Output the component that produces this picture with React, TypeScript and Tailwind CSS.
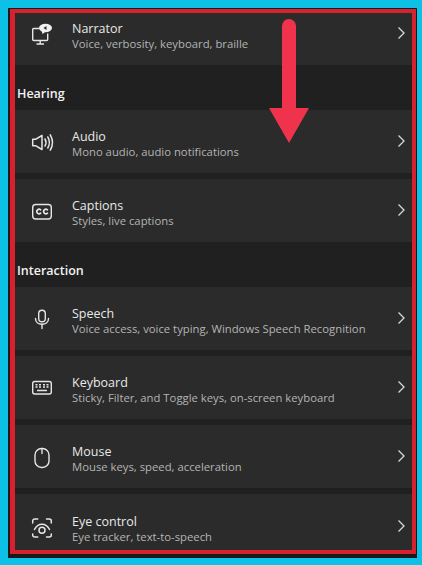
const font = { fontFamily: '"Open Sans", "Noto Sans", sans-serif' };

function NarratorIcon() {
  return (
    <svg width="24" height="24" viewBox="0 0 24 24" fill="none" stroke="#e6e6e6" strokeWidth="1.4">
      <path d="M9.500 6.500H3.700a1 1 0 0 0-1 1v10a1 1 0 0 0 1 1h13a1 1 0 0 0 1-1v-6" />
      <path d="M10.200 18.500v3M6.500 22h7.500" />
      <ellipse cx="15.500" cy="6" rx="6.500" ry="4.200" fill="#f0f0f0" stroke="none" />
      <path d="M11.500 8.500l1 3.500 4-3z" fill="#f0f0f0" stroke="none" />
      <path d="M13.500 6l3-2v4z" fill="#2b2b2b" stroke="none" />
    </svg>
  );
}

function AudioIcon() {
  return (
    <svg width="24" height="24" viewBox="0 0 24 24" fill="none" stroke="#e6e6e6" strokeWidth="1.500" strokeLinecap="round" strokeLinejoin="round">
      <path d="M2.700 9.300h2.800L12 5.500v14l-6.500-3.800H2.700z" />
      <path d="M15 9c1.200 2 1.200 5 0 7" />
      <path d="M17.800 7c2 3.400 2 7.600 0 11" />
      <path d="M20.300 4.800c2.600 4.600 2.600 10.800 0 15.400" />
    </svg>
  );
}

function CaptionsIcon() {
  return (
    <svg width="24" height="24" viewBox="0 0 24 24" fill="none" stroke="#e6e6e6" strokeWidth="1.400" strokeLinecap="round">
      <rect x="2.700" y="5.500" width="18.600" height="14.500" rx="3" />
      <path d="M10.700 10.800a2.300 2.300 0 1 0 0 3.400" strokeWidth="1.600" />
      <path d="M17.500 10.800a2.300 2.300 0 1 0 0 3.400" strokeWidth="1.600" />
    </svg>
  );
}

function SpeechIcon() {
  return (
    <svg width="24" height="24" viewBox="0 0 24 24" fill="none" stroke="#e6e6e6" strokeWidth="1.400" strokeLinecap="round">
      <rect x="8.700" y="3.200" width="6.600" height="11.600" rx="3.300" />
      <path d="M5.500 11.500c0 3.600 2.800 5.800 6.500 5.800s6.500-2.200 6.500-5.800" />
      <path d="M12 17.300v4.200" />
    </svg>
  );
}

function KeyboardIcon() {
  return (
    <svg width="24" height="24" viewBox="0 0 24 24" fill="none" stroke="#e6e6e6" strokeWidth="1.400">
      <rect x="2.700" y="5.500" width="18.600" height="12.500" rx="2" />
      <path d="M5.500 8.700h2M9 8.700h2M13 8.700h2M16.500 8.700h2M5.500 11h2M9 11h2M13 11h2M16.500 11h2" strokeWidth="1.500" />
      <path d="M7 14.500h10" strokeWidth="1.500" />
    </svg>
  );
}

function MouseIcon() {
  return (
    <svg width="24" height="24" viewBox="0 0 24 24" fill="none" stroke="#e6e6e6" strokeWidth="1.400" strokeLinecap="round">
      <rect x="5" y="3.500" width="14" height="19" rx="6.500" />
      <path d="M12 3.500v5" />
    </svg>
  );
}

function EyeIcon() {
  return (
    <svg width="24" height="24" viewBox="0 0 24 24" fill="none" stroke="#e6e6e6" strokeWidth="1.500" strokeLinecap="round">
      <path d="M2.700 8V6a2 2 0 0 1 2-2h3M16.500 4h2.800a2 2 0 0 1 2 2v2M2.700 19v1a2 2 0 0 0 2 2h3M16.500 22h2.800a2 2 0 0 0 2-2v-1" />
      <path d="M4.500 14.500C8 7.500 16 7.500 19.500 14.500" />
      <circle cx="12" cy="15.300" r="3" />
    </svg>
  );
}

function Row({ icon, title, sub, className }: { icon: React.ReactNode; title: string; sub: string; className: string }) {
  return (
    <div className={`flex items-center bg-[#2b2b2b] ${className}`}>
      <div className="flex w-[57px] shrink-0 justify-center pr-[3px]">{icon}</div>
      <div className="min-w-0 flex-1 pt-[3px]">
        <div className="text-[12.5px] leading-[17px] text-[#e8e8e8]">{title}</div>
        <div className="text-[11.3px] leading-[14px] whitespace-nowrap text-[#b4b4b4]">{sub}</div>
      </div>
      <svg width="10" height="14" viewBox="0 0 10 14" fill="none" stroke="#d8d8d8" strokeWidth="1.300" className="mr-[6px] mb-[2px]">
        <path d="M2.500 1.500L8 7l-5.500 5.500" />
      </svg>
    </div>
  );
}

function Heading({ children, className }: { children: string; className: string }) {
  return (
    <div className={`flex items-end pl-[2px] pb-[8px] text-[12.5px] leading-[17px] font-semibold text-[#f2f2f2] ${className}`}>
      {children}
    </div>
  );
}

export default function App() {
  return (
    <div className="h-[565px] w-[422px] overflow-hidden bg-[#0cc0e6] pl-[8px] pt-[8px]" style={font}>
      <div className="relative h-[550px] w-[409px] bg-[#1a1a1a] pl-[2px] pt-[1px]">
        <div className="h-[545px] w-[406px] overflow-hidden border-t-[4px] border-r-[4px] border-b-[4px] border-l-[5px] border-[#d6222f] bg-[#202020]">
          <Row icon={<NarratorIcon />} title="Narrator" sub="Voice, verbosity, keyboard, braille" className="h-[52px] pb-[10px]" />
          <Heading className="h-[45px]">Hearing</Heading>
          <Row icon={<AudioIcon />} title="Audio" sub="Mono audio, audio notifications" className="h-[63px]" />
          <Row icon={<CaptionsIcon />} title="Captions" sub="Styles, live captions" className="mt-[6px] h-[63px]" />
          <Heading className="h-[45px]">Interaction</Heading>
          <Row icon={<SpeechIcon />} title="Speech" sub="Voice access, voice typing, Windows Speech Recognition" className="h-[63px]" />
          <Row icon={<KeyboardIcon />} title="Keyboard" sub="Sticky, Filter, and Toggle keys, on-screen keyboard" className="mt-[6px] h-[63px]" />
          <Row icon={<MouseIcon />} title="Mouse" sub="Mouse keys, speed, acceleration" className="mt-[6px] h-[63px]" />
          <Row icon={<EyeIcon />} title="Eye control" sub="Eye tracker, text-to-speech" className="mt-[6px] h-[56px] pt-[9px]" />
        </div>
        <svg width="40" height="124" viewBox="0 0 40 124" className="absolute top-[11px] left-[261px]">
          <path d="M13 7a7 7 0 0 1 14 0v82h13l-20 35-20-35h13z" fill="#f0334c" />
        </svg>
      </div>
    </div>
  );
}
